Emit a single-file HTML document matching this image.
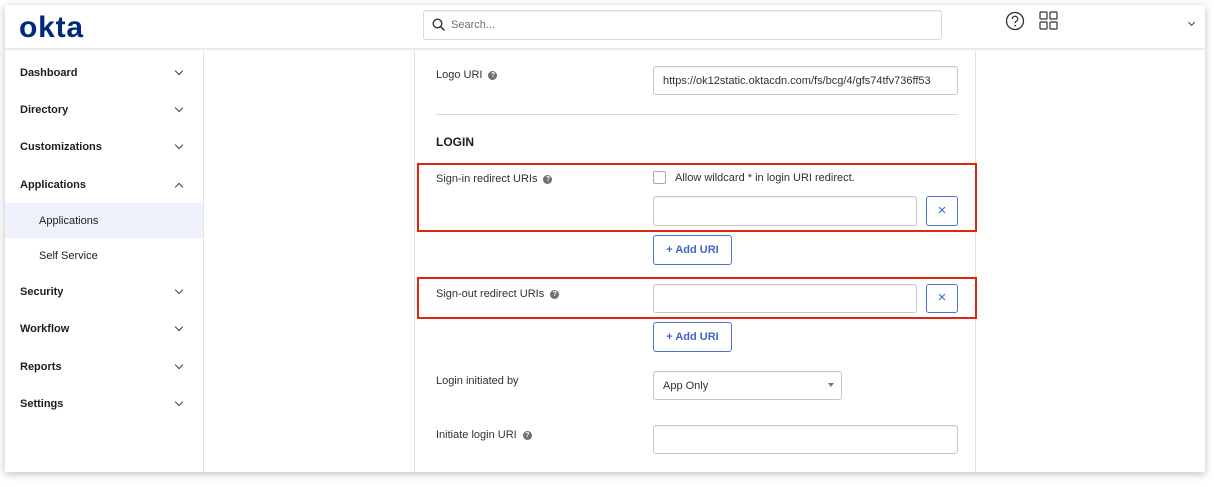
<!DOCTYPE html>
<html><head><style>
*{box-sizing:border-box;margin:0;padding:0}
body{width:1220px;height:487px;background:#fff;font-family:"Liberation Sans",sans-serif;position:relative;overflow:hidden;color:#1d1d21}
.card{position:absolute;left:5px;top:5px;width:1200px;height:467px;background:#fff;box-shadow:0 2px 8px rgba(0,0,0,.25);overflow:hidden}
.a{position:absolute}
.hdr{left:0;top:0;width:1200px;height:45px;border-bottom:2px solid #ebebed}
.nav{font-size:11px;font-weight:bold;color:#1d1d21}
.sub{font-size:11px;color:#1d1d21}
.chev{width:6px;height:6px;border-right:1.3px solid #444;border-bottom:1.3px solid #444;transform:rotate(45deg)}
.lbl{font-size:11px;color:#2f3037}
.q{display:inline-block;width:9px;height:9px;border-radius:50%;background:#6e6e78;color:#fff;font-size:7px;font-weight:bold;text-align:center;line-height:9px;vertical-align:1px;margin-left:6px}
.inp{border:1px solid #c6c6cc;border-radius:3px;background:#fff;box-shadow:inset 0 1px 1px rgba(0,0,0,.06)}
.btn{border:1px solid #4a74d8;border-radius:3px;color:#3e67c8;font-size:11px;font-weight:bold;text-align:center;background:#fff}
.x{font-size:15px;font-weight:normal}
.red{border:2px solid #e1260f}
</style></head><body>
<div class="card">
 <div class="a hdr"></div>
 <div class="a" style="left:14px;top:6px;font-size:30px;font-weight:bold;color:#00297a;letter-spacing:0.8px">okta</div>
 <div class="a inp" style="left:418px;top:5px;width:519px;height:30px;border-color:#d8d8dc"></div>
 <svg class="a" style="left:427px;top:13px" width="14" height="14" viewBox="0 0 14 14"><circle cx="5.5" cy="5.5" r="4.3" fill="none" stroke="#333" stroke-width="1.4"/><path d="M8.7 8.7L12.5 12.5" stroke="#333" stroke-width="1.5"/></svg>
 <div class="a" style="left:446px;top:14px;font-size:11px;color:#6e6e78">Search...</div>
 <svg class="a" style="left:1000px;top:6px" width="20" height="20" viewBox="0 0 20 20"><circle cx="10" cy="10" r="8.5" fill="none" stroke="#333" stroke-width="1.3"/><path d="M7.3 8a2.7 2.7 0 1 1 3.6 2.5c-.7.3-.9.8-.9 1.6" fill="none" stroke="#333" stroke-width="1.3"/><circle cx="10" cy="14.6" r=".9" fill="#333"/></svg>
 <svg class="a" style="left:1034px;top:6px" width="20" height="20" viewBox="0 0 20 20" fill="none" stroke="#333" stroke-width="1.2"><rect x="1" y="1" width="7" height="7" rx="1"/><rect x="11" y="1" width="7" height="7" rx="1"/><rect x="1" y="11" width="7" height="7" rx="1"/><rect x="11" y="11" width="7" height="7" rx="1"/></svg>
 <div class="a chev" style="left:1184px;top:15px;width:5px;height:5px"></div>

 <div class="a" style="left:198px;top:46px;width:1px;height:421px;background:#e4e4e7"></div>
 <div class="a nav" style="left:15px;top:62px">Dashboard</div><div class="a chev" style="left:171px;top:63px"></div>
 <div class="a nav" style="left:15px;top:99px">Directory</div><div class="a chev" style="left:171px;top:100px"></div>
 <div class="a nav" style="left:15px;top:136px">Customizations</div><div class="a chev" style="left:171px;top:137px"></div>
 <div class="a nav" style="left:15px;top:174px">Applications</div><div class="a chev" style="left:171px;top:179px;transform:rotate(225deg)"></div>
 <div class="a" style="left:0;top:198px;width:198px;height:35px;background:#eff2fd"></div>
 <div class="a sub" style="left:34px;top:210px">Applications</div>
 <div class="a sub" style="left:34px;top:245px">Self Service</div>
 <div class="a nav" style="left:15px;top:281px">Security</div><div class="a chev" style="left:171px;top:282px"></div>
 <div class="a nav" style="left:15px;top:318px">Workflow</div><div class="a chev" style="left:171px;top:319px"></div>
 <div class="a nav" style="left:15px;top:356px">Reports</div><div class="a chev" style="left:171px;top:357px"></div>
 <div class="a nav" style="left:15px;top:393px">Settings</div><div class="a chev" style="left:171px;top:394px"></div>

 <div class="a" style="left:409px;top:46px;width:1px;height:421px;background:#e0e0e4"></div>
 <div class="a" style="left:970px;top:46px;width:1px;height:421px;background:#e0e0e4"></div>

 <div class="a lbl" style="left:431px;top:64px">Logo URI<span class="q">?</span></div>
 <div class="a inp" style="left:648px;top:61px;width:305px;height:29px;font-size:11px;color:#2f3037;padding:8px 9px;white-space:nowrap;overflow:hidden">https://ok12static.oktacdn.com/fs/bcg/4/gfs74tfv736ff53</div>
 <div class="a" style="left:431px;top:109px;width:522px;height:1px;background:#d7d7dc"></div>
 <div class="a" style="left:431px;top:130px;font-size:12px;font-weight:bold;color:#1d1d21">LOGIN</div>

 <div class="a red" style="left:412px;top:158px;width:560px;height:69px"></div>
 <div class="a lbl" style="left:431px;top:168px">Sign-in redirect URIs<span class="q">?</span></div>
 <div class="a" style="left:648px;top:166px;width:13px;height:13px;border:1px solid #aaa;border-radius:2px"></div>
 <div class="a lbl" style="left:670px;top:167px">Allow wildcard * in login URI redirect.</div>
 <div class="a inp" style="left:648px;top:191px;width:264px;height:30px"></div>
 <div class="a btn x" style="left:921px;top:191px;width:32px;height:30px;line-height:27px">×</div>
 <div class="a btn" style="left:648px;top:230px;width:79px;height:30px;line-height:28px">+ Add URI</div>

 <div class="a red" style="left:412px;top:272px;width:560px;height:42px"></div>
 <div class="a lbl" style="left:431px;top:283px">Sign-out redirect URIs<span class="q">?</span></div>
 <div class="a inp" style="left:648px;top:279px;width:264px;height:29px"></div>
 <div class="a btn x" style="left:921px;top:279px;width:32px;height:29px;line-height:26px">×</div>
 <div class="a btn" style="left:648px;top:317px;width:79px;height:30px;line-height:28px">+ Add URI</div>

 <div class="a lbl" style="left:431px;top:370px">Login initiated by</div>
 <div class="a inp" style="left:648px;top:366px;width:189px;height:29px;font-size:11px;color:#2f3037;padding:8px 9px">App Only</div>
 <div class="a" style="left:823px;top:378px;width:0;height:0;border-left:3px solid transparent;border-right:3px solid transparent;border-top:4px solid #777"></div>
 <div class="a lbl" style="left:431px;top:424px">Initiate login URI<span class="q">?</span></div>
 <div class="a inp" style="left:648px;top:420px;width:305px;height:29px"></div>
</div>
</body></html>
